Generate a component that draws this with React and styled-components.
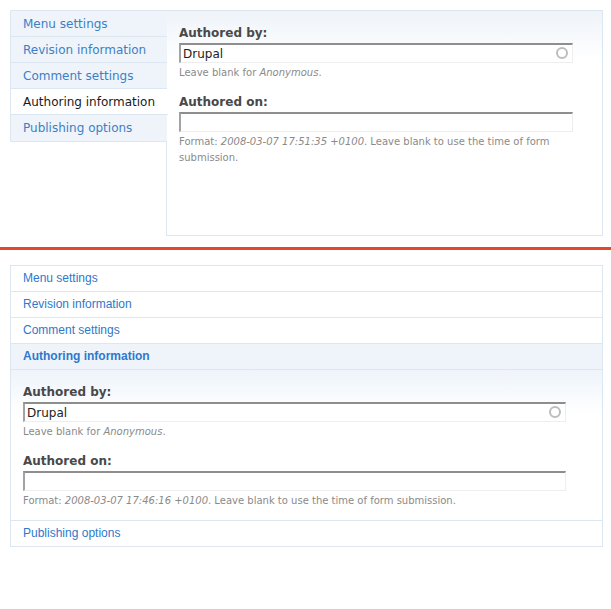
import React from 'react';
import styled, { createGlobalStyle } from 'styled-components';

const GlobalStyle = createGlobalStyle`
  body {
    margin: 0;
    background: #fff;
    font-family: "DejaVu Sans", Verdana, sans-serif;
  }
`;

const Page = styled.div`
  width: 611px;
`;

const VerticalTabs = styled.div`
  display: flex;
  align-items: flex-start;
  padding: 10px 8px 0 10px;
`;

const TabList = styled.ul`
  list-style: none;
  margin: 0 -1px 0 0;
  padding: 0;
  width: 156px;
  flex: none;
  border: 1px solid #dde7f1;
  border-right: none;
  background: #eef4fa;
  position: relative;
  z-index: 1;
`;

const Tab = styled.li`
  height: 25px;
  line-height: 26px;
  padding-left: 12px;
  font-size: 12px;
  border-bottom: 1px solid #dde7f1;
  color: ${(p) => (p.$active ? '#1a1a1a' : '#3d7fc6')};
  background: ${(p) => (p.$active ? '#fff' : 'transparent')};
  margin-right: ${(p) => (p.$active ? '-1px' : '0')};
  &:last-child {
    height: 26px;
    border-bottom: none;
  }
`;

const Pane = styled.div`
  flex: 1;
  box-sizing: border-box;
  height: 226px;
  border: 1px solid #dde7f1;
  background: linear-gradient(#eef3f9, #fff 48px);
  padding: 14px 29px 0 12px;
`;

const Field = styled.div`
  margin-bottom: 13px;
  &:last-child {
    margin-bottom: 0;
  }
`;

const Label = styled.label`
  display: block;
  font-family: "DejaVu Sans", Verdana, sans-serif;
  font-size: 12px;
  font-weight: bold;
  line-height: 16px;
  color: #494949;
  margin-bottom: 2px;
`;

const InputWrap = styled.div`
  position: relative;
`;

const TextInput = styled.input`
  display: block;
  width: 100%;
  box-sizing: border-box;
  height: 20px;
  margin: 0;
  padding: 0 2px;
  border-top: 2px solid #8e8e8e;
  border-left: 2px solid #a3a3a3;
  border-right: 1px solid #eeeeee;
  border-bottom: 1px solid #eeeeee;
  background: #fff;
  font-family: "DejaVu Sans", Verdana, sans-serif;
  font-size: 12px;
  color: #222;
  outline: none;
`;

const Throbber = styled.span`
  position: absolute;
  right: 5px;
  top: 4px;
  width: 8px;
  height: 8px;
  border: 2px solid #bdbdbd;
  border-radius: 50%;
`;

const Description = styled.div`
  margin-top: 2px;
  font-family: "DejaVu Sans", Verdana, sans-serif;
  font-size: 10px;
  line-height: 16px;
  color: #8a8a8a;
`;

const Divider = styled.div`
  height: 3px;
  background: #e3462a;
  margin-top: 11px;
`;

const Accordion = styled.div`
  margin: 15px 8px 0 10px;
  border: 1px solid #dde7f1;
  font-family: "Liberation Sans", Arial, Helvetica, sans-serif;
`;

const Header = styled.div`
  height: 25px;
  line-height: 25px;
  padding-left: 12px;
  font-size: 12px;
  color: #2f78cc;
  border-top: 1px solid #dde7f1;
  font-weight: ${(p) => (p.$active ? 'bold' : 'normal')};
  background: ${(p) => (p.$active ? '#eef4fa' : '#fff')};
  &:first-child {
    border-top: none;
  }
`;

const Panel = styled.div`
  border-top: 1px solid #dde7f1;
  background: linear-gradient(#eef4fa, #fff 44px);
  padding: 14px 36px 11px 12px;
`;

const AuthoringFields = ({ date }) => (
  <>
    <Field>
      <Label>Authored by:</Label>
      <InputWrap>
        <TextInput defaultValue="Drupal" />
        <Throbber />
      </InputWrap>
      <Description>
        Leave blank for <em>Anonymous</em>.
      </Description>
    </Field>
    <Field>
      <Label>Authored on:</Label>
      <TextInput defaultValue="" />
      <Description>
        Format: <em>{date}</em>. Leave blank to use the time of form submission.
      </Description>
    </Field>
  </>
);

const tabs = [
  'Menu settings',
  'Revision information',
  'Comment settings',
  'Authoring information',
  'Publishing options',
];

export default function App() {
  return (
    <Page>
      <GlobalStyle />
      <VerticalTabs>
        <TabList>
          {tabs.map((t) => (
            <Tab key={t} $active={t === 'Authoring information'}>
              {t}
            </Tab>
          ))}
        </TabList>
        <Pane>
          <AuthoringFields date="2008-03-07 17:51:35 +0100" />
        </Pane>
      </VerticalTabs>
      <Divider />
      <Accordion>
        {tabs.map((t) =>
          t === 'Authoring information' ? (
            <React.Fragment key={t}>
              <Header $active>{t}</Header>
              <Panel>
                <AuthoringFields date="2008-03-07 17:46:16 +0100" />
              </Panel>
            </React.Fragment>
          ) : (
            <Header key={t}>{t}</Header>
          )
        )}
      </Accordion>
    </Page>
  );
}
